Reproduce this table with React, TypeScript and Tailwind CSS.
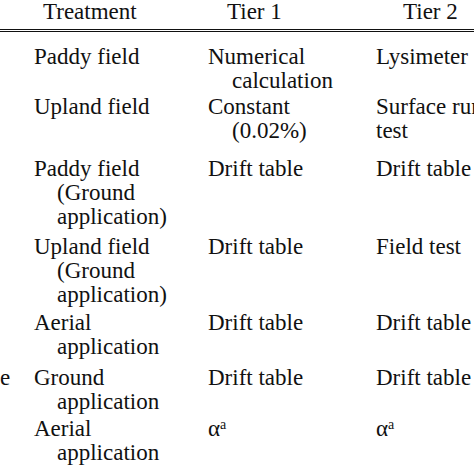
import React from "react";

type Row = {
  left?: string;
  treatment: string[];
  tier1: React.ReactNode[];
  tier2: React.ReactNode[];
  gap: string;
};

const alpha = (
  <>
    α<sup className="text-[14px]">a</sup>
  </>
);

const rows: Row[] = [
  { treatment: ["Paddy field"], tier1: ["Numerical", "calculation"], tier2: ["Lysimeter"], gap: "pt-[13px]" },
  { treatment: ["Upland field"], tier1: ["Constant", "(0.02%)"], tier2: ["Surface runoff", "test"], gap: "pt-[2px]" },
  {
    treatment: ["Paddy field", "(Ground", "application)"],
    tier1: ["Drift table"],
    tier2: ["Drift table"],
    gap: "pt-[14px]",
  },
  {
    treatment: ["Upland field", "(Ground", "application)"],
    tier1: ["Drift table"],
    tier2: ["Field test"],
    gap: "pt-[6px]",
  },
  { treatment: ["Aerial", "application"], tier1: ["Drift table"], tier2: ["Drift table"], gap: "pt-[4px]" },
  {
    left: "e",
    treatment: ["Ground", "application"],
    tier1: ["Drift table"],
    tier2: ["Drift table"],
    gap: "pt-[7px]",
  },
  { treatment: ["Aerial", "application"], tier1: [alpha], tier2: [alpha], gap: "pt-[3px]" },
];

function Lines({ items }: { items: React.ReactNode[] }) {
  return (
    <>
      {items.map((t, i) => (
        <React.Fragment key={i}>
          {i > 0 && <br />}
          {t}
        </React.Fragment>
      ))}
    </>
  );
}

export default function App() {
  return (
    <div
      className="w-[474px] h-[474px] overflow-hidden bg-white text-[#111] text-[23px] leading-[24px]"
      style={{ fontFamily: '"Liberation Serif", "Times New Roman", serif' }}
    >
      <div className="w-[680px]">
        <div className="grid grid-cols-[34px_174px_168px_304px] border-b-[3px] border-double border-[#111] pb-[5px]">
          <div />
          <div className="pl-[9px]">Treatment</div>
          <div className="pl-[19px]">Tier 1</div>
          <div className="pl-[27px]">Tier 2</div>
        </div>
        {rows.map((r, i) => (
          <div key={i} className={`grid grid-cols-[34px_174px_168px_304px] ${r.gap}`}>
            <div className="text-right pr-[26px]">{r.left}</div>
            <div className="pl-[23px] indent-[-23px]">
              <Lines items={r.treatment} />
            </div>
            <div className="pl-[24px] indent-[-24px]">
              <Lines items={r.tier1} />
            </div>
            <div className="whitespace-nowrap">
              <Lines items={r.tier2} />
            </div>
          </div>
        ))}
      </div>
    </div>
  );
}
